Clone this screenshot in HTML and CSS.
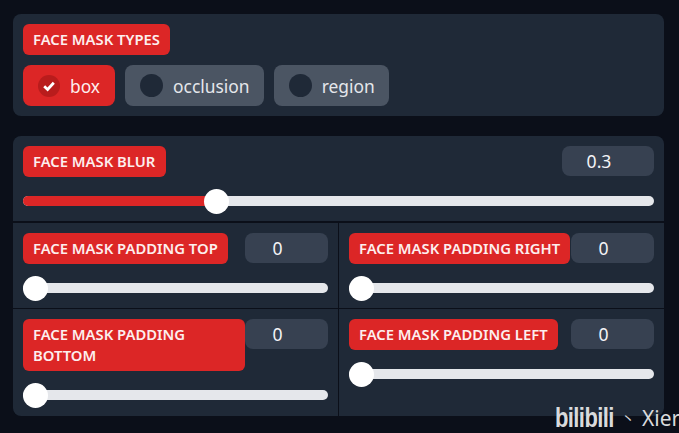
FILE: index.html
```html
<!DOCTYPE html>
<html lang="en">
<head>
    <meta charset="UTF-8">
    <meta name="viewport" content="width=device-width, initial-scale=1.0">
    <title>Face Mask Options</title>
    <link rel="stylesheet" href="styles.css">
</head>
<body>
    <section class="panel types">
        <span class="label">FACE MASK TYPES</span>
        <div class="options">
            <div class="option selected">
                <span class="radio">
                    <svg viewBox="0 0 16 16" width="16" height="16"><path d="M3.2 8.2 6.6 11.4 12.8 4.8" fill="none" stroke="#fff" stroke-width="2.8"/></svg>
                </span>
                box
            </div>
            <div class="option"><span class="radio"></span>occlusion</div>
            <div class="option"><span class="radio"></span>region</div>
        </div>
    </section>

    <section class="panel sliders">
        <div class="block wide">
            <div class="head">
                <span class="label">FACE MASK BLUR</span>
                <span class="number">0.3</span>
            </div>
            <div class="slider" style="--value: 0.298">
                <div class="fill"></div>
                <div class="thumb"></div>
            </div>
        </div>
        <div class="block">
            <div class="head">
                <span class="label">FACE MASK PADDING TOP</span>
                <span class="number">0</span>
            </div>
            <div class="slider" style="--value: 0"><div class="thumb"></div></div>
        </div>
        <div class="block">
            <div class="head">
                <span class="label">FACE MASK PADDING RIGHT</span>
                <span class="number">0</span>
            </div>
            <div class="slider" style="--value: 0"><div class="thumb"></div></div>
        </div>
        <div class="block">
            <div class="head">
                <span class="label">FACE MASK PADDING BOTTOM</span>
                <span class="number">0</span>
            </div>
            <div class="slider" style="--value: 0"><div class="thumb"></div></div>
        </div>
        <div class="block">
            <div class="head">
                <span class="label">FACE MASK PADDING LEFT</span>
                <span class="number">0</span>
            </div>
            <div class="slider" style="--value: 0"><div class="thumb"></div></div>
        </div>
    </section>

    <div class="watermark"><span class="logo">bilibili</span><span class="tick">丶</span><span>Xier</span></div>
</body>
</html>
```

FILE: styles.css
```css
html, body {
    height: 100%;
}
body {
    margin: 0;
    padding: 14px 15px 0 13px;
    box-sizing: border-box;
    overflow: hidden;
    position: relative;
    background-color: #0b0f19;
    font-family: "Noto Sans", "Open Sans", sans-serif;
}
.panel {
    border-radius: 8px;
    background-color: #1f2937;
}
.types {
    padding: 10px;
    height: 102px;
    box-sizing: border-box;
}
.label {
    display: block;
    width: fit-content;
    min-width: 123px;
    padding: 5px 10px;
    border-radius: 6px;
    background-color: #dc2626;
    color: #fdeeee;
    font-size: 14.8px;
    font-weight: 600;
    line-height: 21px;
}
.options {
    display: flex;
    gap: 10px;
    margin-top: 10px;
}
.option {
    display: flex;
    align-items: center;
    gap: 10px;
    height: 41px;
    padding: 0 14px 0 15px;
    border-radius: 8px;
    background-color: #4b5563;
    color: #e5e7eb;
    font-size: 17.4px;
}
.option.selected {
    padding-right: 15px;
    background-color: #dc2626;
    color: #fdeeee;
}
.radio {
    display: flex;
    align-items: center;
    justify-content: center;
    width: 23px;
    height: 23px;
    border-radius: 50%;
    background-color: #1f2937;
}
.selected .radio {
    width: 22px;
    height: 22px;
    background-color: #b91c1c;
}
.sliders {
    display: grid;
    grid-template-columns: 325px 325px;
    grid-template-rows: 86px 85px 107px;
    gap: 1px;
    height: 280px;
    margin-top: 20px;
    overflow: hidden;
    background-color: #0b0f19;
}
.block {
    padding: 10px;
    background-color: #1f2937;
}
.wide {
    grid-column: 1 / 3;
    margin-bottom: 1px;
}
.head {
    display: flex;
    justify-content: space-between;
    align-items: flex-start;
}
.number {
    flex-shrink: 0;
    width: 83px;
    height: 30px;
    padding-right: 18px;
    box-sizing: border-box;
    border-radius: 8px;
    background-color: #374151;
    color: #f3f4f6;
    font-size: 17.6px;
    line-height: 30px;
    text-align: center;
}
.wide .number {
    width: 92px;
}
.slider {
    position: relative;
    height: 10px;
    margin-top: 19px;
    border-radius: 5px;
    background-color: #e5e7eb;
}
.fill {
    width: calc(var(--value) * (100% - 25px) + 12px);
    height: 100%;
    border-radius: 5px 0 0 5px;
    background-color: #dc2626;
}
.thumb {
    position: absolute;
    top: -7.5px;
    left: calc(var(--value) * (100% - 25px));
    width: 25px;
    height: 25px;
    border-radius: 50%;
    background-color: #fff;
}
.watermark {
    position: absolute;
    left: 555px;
    top: 404px;
    display: flex;
    align-items: center;
    width: 130px;
    height: 28px;
    color: #d9dadc;
    font-size: 21px;
    white-space: nowrap;
}
.logo {
    width: 66px;
    font-family: "Liberation Sans", sans-serif;
    font-size: 22px;
    font-weight: 700;
    letter-spacing: -0.6px;
    transform: scaleY(1.25);
    transform-origin: left center;
}
.tick {
    width: 21px;
    font-family: "Noto Sans CJK SC", sans-serif;
    font-size: 14px;
}
```
